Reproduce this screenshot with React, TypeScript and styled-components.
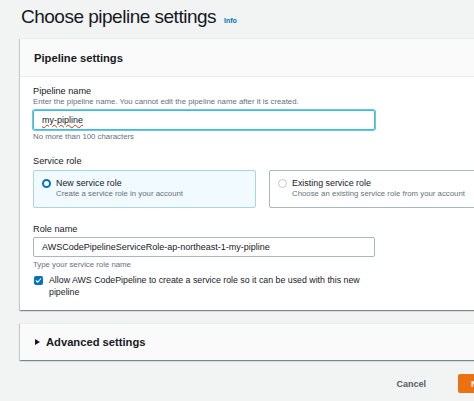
import styled, { createGlobalStyle } from "styled-components"

const GlobalStyle = createGlobalStyle`
	html, body {
		margin: 0;
		padding: 0;
		background: #f2f3f3;
		overflow: hidden;
	}
	body {
		font-family: "Liberation Sans", Arial, sans-serif;
		color: #16191f;
	}
`

const Page = styled.div`
	width: 486px;
	padding: 1px 0 0 20px;
`

const Title = styled.h1`
	margin: 0 0 0 1px;
	height: 32px;
	font-size: 19px;
	font-weight: 400;
	letter-spacing: -0.5px;
	line-height: 32px;
	display: flex;
	align-items: baseline;
	gap: 8px;
`

const InfoLink = styled.a`
	font-size: 7px;
	line-height: 1;
	letter-spacing: 0;
	font-weight: 700;
	color: #0073bb;
`

const Panel = styled.section`
	background: #ffffff;
	box-shadow: 0 1px 1px 0 rgba(0, 28, 36, 0.3), 1px 1px 1px 0 rgba(0, 28, 36, 0.15),
		-1px 1px 1px 0 rgba(0, 28, 36, 0.15);
	border-top: 1px solid #eaeded;
	margin-top: 5px;
`

const PanelHeader = styled.div`
	background: #fafafa;
	border-bottom: 1px solid #eaeded;
	height: 37px;
	display: flex;
	align-items: center;
	padding-left: 14px;
	font-size: 11.2px;
	font-weight: 700;
`

const PanelBody = styled.div`
	padding: 8px 13px 12px 13px;
`

const Field = styled.div<{ gap?: number }>`
	margin-bottom: ${(p) => p.gap ?? 0}px;
`

const Label = styled.div`
	font-size: 9.2px;
	line-height: 12px;
`

const Description = styled.div`
	font-size: 7.8px;
	line-height: 10px;
	color: #687078;
`

const Input = styled.div<{ focused?: boolean }>`
	width: 342px;
	box-sizing: border-box;
	height: 20px;
	margin: ${(p) => (p.focused ? "3px 0 2px" : "2px 0 3px")};
	border: 1px solid ${(p) => (p.focused ? "#44b9d6" : "#aab7b8")};
	box-shadow: ${(p) => (p.focused ? "0 0 0 1px #6cc7e0" : "none")};
	border-radius: 2px;
	display: flex;
	align-items: center;
	padding-left: 8px;
	font-size: 9px;
`

const Squiggle = styled.span`
	text-decoration: underline wavy #d13212;
	text-decoration-thickness: 0.5px;
	text-underline-offset: 1px;
`

const Tiles = styled.div`
	display: grid;
	grid-template-columns: 223px 223px;
	gap: 13px;
	margin-top: 3px;
`

const Tile = styled.div<{ selected?: boolean }>`
	box-sizing: border-box;
	height: 38px;
	border: 1px solid ${(p) => (p.selected ? "#a9d3ec" : "#aab7b8")};
	background: ${(p) => (p.selected ? "#f1faff" : "#ffffff")};
	border-radius: 2px;
	display: flex;
	align-items: flex-start;
	padding: 6px 8px 0 8px;
	gap: 5px;
`

const Radio = styled.span<{ checked?: boolean }>`
	flex: none;
	box-sizing: border-box;
	width: 9px;
	height: 9px;
	margin-top: 2px;
	border-radius: 50%;
	border: ${(p) => (p.checked ? "2.5px solid #0073bb" : "1px solid #c3c9ca")};
	background: #ffffff;
`

const TileTitle = styled.div`
	font-size: 8.9px;
	line-height: 12px;
`

const Checkbox = styled.span`
	flex: none;
	width: 9px;
	height: 9px;
	margin-top: 2px;
	border-radius: 2px;
	background: #0073bb;
	display: flex;
	align-items: center;
	justify-content: center;
`

const CheckRow = styled.div`
	display: flex;
	gap: 6px;
	width: 342px;
	margin-top: 4px;
	padding-left: 1px;
	font-size: 8.8px;
	line-height: 12px;
`

const Expander = styled.section`
	margin-top: 13px;
	background: #fafafa;
	height: 36px;
	box-shadow: 0 1px 1px 0 rgba(0, 28, 36, 0.3), 1px 1px 1px 0 rgba(0, 28, 36, 0.15),
		-1px 1px 1px 0 rgba(0, 28, 36, 0.15);
	border-top: 1px solid #eaeded;
	display: flex;
	align-items: center;
	padding-left: 15px;
	gap: 6px;
	font-size: 11.2px;
	font-weight: 700;
`

const Caret = styled.span`
	width: 0;
	height: 0;
	border-top: 3.5px solid transparent;
	border-bottom: 3.5px solid transparent;
	border-left: 5px solid #16191f;
`

const Footer = styled.div`
	display: flex;
	justify-content: flex-end;
	align-items: center;
	gap: 32px;
	margin-top: 14px;
`

const CancelButton = styled.button`
	border: none;
	background: transparent;
	font-family: inherit;
	font-size: 9px;
	font-weight: 700;
	color: #545b64;
	padding: 0;
`

const PrimaryButton = styled.button`
	border: none;
	background: #ec7211;
	color: #ffffff;
	font-family: inherit;
	font-size: 9px;
	font-weight: 700;
	height: 19px;
	width: 48px;
	padding: 0 0 0 13px;
	text-align: left;
	border-radius: 2px;
`

const App = () => {
	return (
		<>
			<GlobalStyle />
			<Page>
				<Title>
					Choose pipeline settings <InfoLink>Info</InfoLink>
				</Title>
				<Panel>
					<PanelHeader>Pipeline settings</PanelHeader>
					<PanelBody>
						<Field gap={13}>
							<Label>Pipeline name</Label>
							<Description>
								Enter the pipeline name. You cannot edit the pipeline name after it is created.
							</Description>
							<Input focused>
								<Squiggle>my-pipline</Squiggle>
							</Input>
							<Description>No more than 100 characters</Description>
						</Field>
						<Field gap={15}>
							<Label>Service role</Label>
							<Tiles>
								<Tile selected>
									<Radio checked />
									<div>
										<TileTitle>New service role</TileTitle>
										<Description>Create a service role in your account</Description>
									</div>
								</Tile>
								<Tile>
									<Radio />
									<div>
										<TileTitle>Existing service role</TileTitle>
										<Description>Choose an existing service role from your account</Description>
									</div>
								</Tile>
							</Tiles>
						</Field>
						<Field>
							<Label>Role name</Label>
							<Input>AWSCodePipelineServiceRole-ap-northeast-1-my-pipline</Input>
							<Description>Type your service role name</Description>
							<CheckRow>
								<Checkbox>
									<svg width="7" height="7" viewBox="0 0 14 14">
										<path
											d="M2.5 7.5 L5.5 10.5 L11.5 3.5"
											fill="none"
											stroke="#fff"
											strokeWidth="2.2"
											strokeLinecap="round"
											strokeLinejoin="round"
										/>
									</svg>
								</Checkbox>
								<span>
									Allow AWS CodePipeline to create a service role so it can be used with this new
									pipeline
								</span>
							</CheckRow>
						</Field>
					</PanelBody>
				</Panel>
				<Expander>
					<Caret />
					Advanced settings
				</Expander>
				<Footer>
					<CancelButton>Cancel</CancelButton>
					<PrimaryButton>Next</PrimaryButton>
				</Footer>
			</Page>
		</>
	)
}

export default App
